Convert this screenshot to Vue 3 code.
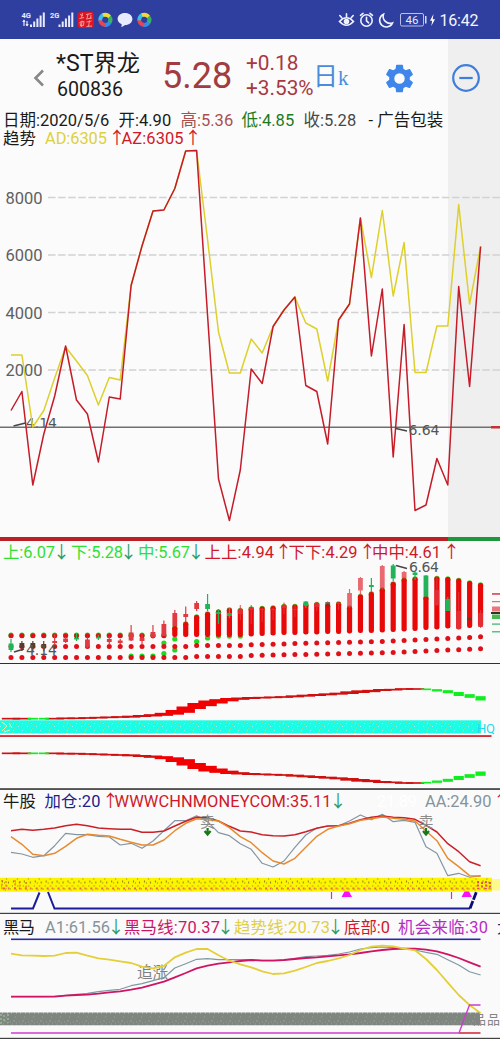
<script setup>
  import { ref } from 'vue'

  const step = 10.92
  const px = (i) => 11 + i * step
  // values are stored as screen y, optionally scaled (k) and shifted (o)
  const line = (ys, o = 0, k = 1) => ys.map((y, i) => `${px(i).toFixed(1)},${(y / k + o).toFixed(1)}`).join(' ')

  const quote = ref([
    { t: '日期:2020/5/6', c: 'ink' },
    { t: '开:4.90', c: 'ink' },
    { t: '高:5.36', c: 'brown' },
    { t: '低:4.85', c: 'green' },
    { t: '收:5.28', c: 'grey' },
    { t: '- 广告包装', c: 'ink' }
  ])

  // legends: [text, x, width, color], arrows have no width and are centered
  const legends = {
    trend: [
      ['趋势', 3, 33, '#1a1a1a'], ['AD:6305', 45, 62, '#ddd040'], ['↑', 117, 0, '#d01828'],
      ['AZ:6305', 121.5, 62, '#d01828'], ['↑', 193, 0, '#d01828']
    ],
    band: [
      ['上:6.07', 3, 52, '#30e030'], ['↓', 61.5, 0, '#2c9a68'], ['下:5.28', 71, 52, '#30e030'],
      ['↓', 128.5, 0, '#2c9a68'], ['中:5.67', 138, 52, '#30e030'], ['↓', 196, 0, '#2c9a68'],
      ['上上:4.94', 204.5, 69.5, '#d01828'], ['↑', 283.5, 0, '#d01828'], ['下下:4.29', 288.5, 69, '#d01828'],
      ['↑', 367.5, 0, '#d01828'], ['中中:4.61', 372, 69, '#d01828'], ['↑', 451.5, 0, '#d01828']
    ],
    bull: [
      ['牛股', 3, 33, '#1a1a1a'], ['加仓:20', 44.5, 56, '#20208c'], ['↑', 110.5, 0, '#d01828'],
      ['WWWCHNMONEYCOM:35.11', 114.5, 217, '#d01828'], ['↓', 338, 0, '#2c9a68'],
      ['21.89', 377, 40, '#ffffff'], ['AA:24.90', 425, 66.5, '#85949c'], ['↑', 501.5, 0, '#d01828']
    ],
    horse: [
      ['黑马', 3, 32, '#1a1a1a'], ['A1:61.56', 45, 65, '#85949c'], ['↓', 116, 0, '#2c9a68'],
      ['黑马线:70.37', 124, 96, '#cc1468'], ['↓', 225.5, 0, '#2c9a68'], ['趋势线:20.73', 234, 96, '#dfcf48'],
      ['↓', 335.5, 0, '#2c9a68'], ['底部:0', 344, 46, '#d01828'], ['机会来临:30', 398, 90, '#b62cc4'],
      ['大', 497, 16, '#20208c']
    ]
  }

  const az = [410.5,391.5,485,434,396,346,400,414,462,397,399,285.5,246,211,210,188.5,151,150.5,316,479,520.5,470,369,383.5,326.5,310,297,385.5,391.5,444,320,304,218,356,289,457,324.5,510.5,505,458.5,485,286.5,386.5,246.5]
  const ad = [355,355,427,410.5,378,347,361,375.5,405,377.5,380,285.5,246,211,210,188.5,151,150.5,240,332,373,373,339,353,326.5,310,297,323,329,381,320,304,218,277.5,210.5,296,242.5,372.5,372.5,326,326,204.5,304,246.5]
  const scale = [[8000, 197.5], [6000, 255], [4000, 312.5], [2000, 370]]

  // thick bars from index 15: [top, bottom]
  const bars = [[626,637],[622,637],[615,637],[612,637],[610,637],[608,637],[608.5,637],[607,636.5],[606.5,636],[606,635.5],[604.5,635],[604.5,635],[603,634.5],[602.5,634.5],[604,634],[602,634],[606,633.5],[594.5,633],[592,633],[588,632.5],[582,632],[578,631.5],[577,631],[596,630],[576.5,629.5],[577,628.5],[578.5,629.5],[581,628],[583,627]]
  const midDots = Array.from({ length: 44 }, (_, i) => i < 17 ? 646.5 : i < 22 ? 645.4 : 644.7 - (i - 22) * 0.27 - Math.max(0, i - 34) * 0.24)
  const lowDots = Array.from({ length: 44 }, (_, i) => i < 17 ? 657.6 : i < 22 ? 656.5 : 655.5 - (i - 22) * 0.22 - Math.max(0, i - 34) * 0.24)
  const limeDots = [[14,643],[14,653.5],[15,639],[15,650],[17,641.5],[18,638]]
  const R = '#e23a42', G = '#22b25a', D = '#5a3a2c'
  // candles: [index, high, low, open, close, color]
  const candles = [
    [0,639,652,643.5,650,G],[1,641,651,643,648,D],[2,641,651,643,648,D],[3,641,651,644,648,D],
    [4,634,646,641,643,R],[5,637,643,638.5,642,R],[6,633,641,638,639.5,G],[7,637,648,639.5,647,R],
    [8,635,640,637,638.5,G],[9,636,645,639,642,R],[10,639,644,640.5,643,R],[11,625,641,632.5,640.5,R],
    [12,634,645,638,641,R],[13,625,638.5,632,637,R],[14,620.5,636,624,636,R],[15,610,626,613,626,R],
    [16,606.5,622,614,617,R],[17,601,611,603,609,R],[18,594,611,604,609,G],[19,609,624,612,614,G],
    [20,608,618,613,616,G],[21,605,620,609,614,R],[22,605,624,607,610,R],[23,608,622,609,610,R],
    [24,608,620,609,610,R],[25,602.5,614,605,608,R],[26,605,617,609,610,R],[27,601,608,601.5,606,G],
    [28,602,611,603,607,R],[29,601.5,608,602,606,D],[30,602,610,603,604,R],[31,589,608,593,607,R],
    [32,577,595,578,590.5,R],[33,578,592,585,587,G],[34,565,590,566,588,R],[35,564,581,565.5,578.5,G],
    [36,571,579,572,578,R],[37,571.5,580,572.5,575,G],[38,575,596.5,575.5,596.5,G],[39,577,606,590,605,R],
    [40,597,611,599,611,G],[41,592,629,611,629,R],[42,617,621,618,620,D],[43,610,628,613,627,R]
  ]

  // ribbon: [center y * 3, height * 3]
  const ribbon = [[161,5],[161,5],[161,5],[161,5],[161,5],[160,5],[160,5],[159,5],[158,5],[157,5],[156,5],[155,6],[153,6],[151,7],[148,9],[142,14],[134,19],[123,18],[115,17],[109,13],[104,10],[101,7],[99,6],[98,5],[97,5],[96,5],[94,6],[92,6],[90,6],[88,6],[86,6],[83,8],[80,8],[78,7],[75,6],[74,5],[72,5],[72,5],[73,5],[76,7],[80,9],[87,12],[93,11],[100,13]]
  const lime = (i) => i === 2 || i === 3 || i > 37
  const segs = ribbon.flatMap(([y, h], i) => {
    const w = lime(i) ? 10.2 : 18.4
    const item = { x: px(i) - w / 2, w, h: h / 3, fill: lime(i) ? '#10ee20' : h > 8 ? '#f00000' : '#d01010' }
    return [{ ...item, y: 665 + (y - h / 2) / 3 }, { ...item, y: 665 + (426 - y - h / 2) / 3 }]
  }).sort((a, b) => b.w - a.w)

  const bullRed = [137,133,136,133,129,122,118,122,129,131,133,133,142,142,138,123,109,97,98,108,124,138,141,149,152,153,149,140,130,123,122,115,104,97,93,97,98,103,121,141,176,200,230,242]
  const bullGrey = [202,207,217,212,182,145,149,149,154,156,180,175,190,168,137,107,107,92,110,143,152,176,193,235,246,228,187,150,129,123,122,108,90,104,88,110,106,112,185,205,272,265,277,272]
  const bullOrange = [155,178,208,212,205,184,160,148,151,153,163,172,180,180,165,137,115,101,104,108,128,155,173,203,228,237,220,187,154,133,123,116,106,101,96,100,103,108,138,167,220,245,272,274]

  const horseYellow = [506,511,512,513,512,504,503,512,520,524,529,534,545,550,543,517,503,492,492,511,527,538,547,559,567,565,557,546,534,528,520,510,495,485,482,484,491,496,522,555,593,630,660,685]
  const horsePink = [635,635,635,635,635,632,630,629,626,622,619,614,608,599,590,577,564,550,542,536,532,528,525,527,527,525,522,519,517,514,511,508,504,499,495,492,491,491,494,499,508,519,532,545]
  const horseGrey = [635,635,635,635,634,631,628,625,620,616,613,602,596,587,578,549,536,523,521,524,524,524,524,526,526,525,520,515,513,511,507,501,492,488,486,488,491,495,502,508,524,540,560,570]
</script>

<template>
  <div class="screen">
    <div class="status">
      <svg width="500" height="39" viewBox="0 0 500 39">
        <g fill="#e8eaff">
          <text x="21.500" y="18" class="net">4G</text>
          <text x="50" y="18" class="net">2G</text>
          <path d="M24 20v6M27 26v-5" stroke="#e8eaff" stroke-width="1.200" />
          <path d="M22.200 22l1.800-2.500 1.500 2.500M25.500 24l1.500 2.500 1.800-2.500" />
          <g v-for="x in [30, 58.5]" :key="x">
            <rect :x="x" y="24.500" width="2" height="2.500" />
            <rect :x="x + 3.2" y="21.500" width="2" height="5.500" />
            <rect :x="x + 6.4" y="18.500" width="2" height="8.500" />
            <rect :x="x + 9.6" y="15.500" width="2" height="11.500" />
            <rect :x="x + 12.8" y="12.500" width="2" height="14.500" />
          </g>
        </g>
        <rect x="77.500" y="12" width="16.500" height="16" rx="3" fill="#dc1424" />
        <g stroke="#f0a8a0" stroke-width=".9" fill="none">
          <path d="M80 14.500l3 1M82.500 13l-1 5M79.500 18.500l4.500-1M86 14.500l5.500-1M88 14l-1 4.500M91 15l-.5 3.500M86 19l6-1M80 22l4-.5-.5 4-3 .5zM82 20.500l-.5 6.500M86.500 22l5-1M89.500 20.500l-1 6M86.500 26.500l5.500-.5" />
        </g>
        <g v-for="x in [105.3, 144.3]" :key="x" :transform="`translate(${x} 19.800)`">
          <path d="M-7 1A7 7 0 0 1 -2 -6.700L-1 -3.200L-4 2z" fill="#38c0e8" />
          <path d="M-3 -6.500A7 7 0 0 1 5.800 -4L2.500 -.500L-2 -3.500z" fill="#f4d838" />
          <path d="M5.500 -4.300A7 7 0 0 1 5.800 4L3 3.500L2 -1z" fill="#38b460" />
          <path d="M6 3.700A7 7 0 0 1 -1.500 6.900L-1 3.500L3 2z" fill="#2c90f0" />
          <path d="M-.5 7A7 7 0 0 1 -7 .5L-3 .8L.5 3.800z" fill="#e84452" />
          <circle r="3" fill="#2f3f9f" />
        </g>
        <path d="M125 13c4.300 0 7.400 2.600 7.400 6s-3.100 6-7.200 6l-3.800 2.200.300-3c-2.600-1-4.100-3-4.100-5.200 0-3.400 3.100-6 7.400-6z" fill="#e8eaff" />

        <g fill="none" stroke="#f0f2ff" stroke-width="1.600" stroke-linecap="round">
          <path d="M339.500 21.500q7-7.500 14 0-7 7.500-14 0zM346.500 17v-3.200M341.800 17.700l-2-2.200M351.200 17.700l2-2.200" />
          <circle cx="346.500" cy="21.500" r="2" fill="#f0f2ff" />
          <circle cx="366.500" cy="20.500" r="5.700" />
          <path d="M366.500 17.300v3.500l2.200 2M360.500 15.300l2.500-2M372.500 15.300l-2.500-2" />
          <path d="M383.500 14.200a6.700 6.700 0 1 0 9 8.700 7 7 0 0 1-9-8.700z" />
        </g>
        <rect x="400.500" y="13.500" width="23" height="12.500" rx="1.500" fill="none" stroke="#b8c0ea" />
        <rect x="425" y="16" width="1.500" height="7.500" fill="#d8dcf6" />
        <text x="405.500" y="23.700" font-size="11.500" textLength="13" fill="#e8eaff">46</text>
        <path d="M433.500 14l-3.500 6.700h2.200l-.900 5.300 3.700-6.800h-2.300z" fill="#fff" />
        <text x="439.500" y="25.800" font-size="16" textLength="39" fill="#f4f5ff">16:42</text>
      </svg>
    </div>

    <div class="main">
      <header>
        <svg class="back" width="12" height="18" viewBox="0 0 12 18"><path d="M10 1.500L2.500 9l7.500 7.500" /></svg>
        <div class="name">
          <b>*ST界龙</b>
          <i>600836</i>
        </div>
        <div class="price">5.28</div>
        <div class="change">
          <span>+0.18</span>
          <span>+3.53%</span>
        </div>
        <div class="period">日<em>k</em></div>
        <svg class="gear" width="33" height="33" viewBox="0 0 24 24">
          <path d="M19.430 12.980c.040-.320.070-.640.070-.980s-.030-.660-.070-.980l2.110-1.650c.190-.150.240-.420.120-.640l-2-3.460c-.120-.220-.390-.300-.610-.220l-2.490 1c-.520-.400-1.080-.730-1.690-.980l-.380-2.650C14.460 2.180 14.250 2 14 2h-4c-.250 0-.460.180-.490.420l-.380 2.650c-.610.250-1.170.590-1.690.980l-2.490-1c-.230-.090-.490 0-.610.220l-2 3.460c-.130.220-.070.490.120.640l2.110 1.650c-.040.320-.070.650-.070.980s.030.660.070.980l-2.110 1.650c-.190.150-.240.420-.120.640l2 3.460c.120.220.390.300.610.220l2.490-1c.520.400 1.080.730 1.690.980l.380 2.650c.030.240.240.420.490.420h4c.250 0 .460-.180.490-.420l.380-2.650c.610-.250 1.170-.590 1.690-.980l2.490 1c.230.090.490 0 .610-.220l2-3.460c.120-.220.070-.490-.120-.640l-2.110-1.650zM12 15.800a3.800 3.800 0 1 1 0-7.600 3.800 3.800 0 0 1 0 7.600z" />
        </svg>
        <svg class="minus" width="30" height="30" viewBox="0 0 30 30">
          <circle cx="15" cy="15" r="12.800" />
          <path d="M8.300 15h13.400" />
        </svg>
      </header>
      <div class="quote">
        <span v-for="q in quote" :key="q.t" :class="q.c">{{ q.t }}</span>
      </div>
      <svg class="chart" width="500" height="408" viewBox="0 129 500 408">
        <g class="legend">
          <text v-for="l in legends.trend" :key="l[1]" :x="l[1]" y="144" :fill="l[3]" :class="{ arrow: !l[2] }" :textLength="l[2] || null">{{ l[0] }}</text>
        </g>
        <g v-for="s in scale" :key="s[0]">
          <line x1="48" x2="500" :y1="s[1]" :y2="s[1]" class="dash" />
          <text x="5.500" :y="s[1] + 6" class="axis" textLength="37">{{ s[0] }}</text>
        </g>
        <text x="26" y="427.500" class="mark" textLength="31">4.14</text>
        <path d="M13.500 426l12-3" class="pointer" />
        <line x1="0" x2="491" y1="427.300" y2="427.300" stroke="#707070" stroke-width="1.500" />
        <rect x="491" y="426" width="9" height="2.500" fill="#c83038" />
        <polyline :points="line(ad)" stroke="#ddd02c" class="ln" />
        <polyline :points="line(az)" stroke="#c41c28" class="ln" />
        <path d="M396 428.500l11 2.500" class="pointer" />
        <text x="408.500" y="435" class="mark" textLength="31">6.64</text>
      </svg>
    </div>
    <div class="split"></div>

    <svg class="chart" width="500" height="123" viewBox="0 541 500 123">
      <g class="legend">
        <text v-for="l in legends.band" :key="l[1]" :x="l[1]" y="557.500" :fill="l[3]" :class="{ arrow: !l[2] }" :textLength="l[2] || null">{{ l[0] }}</text>
      </g>
      <g fill="#20d820">
        <circle v-for="i in 15" :key="'h' + i" :cx="px(i - 1)" cy="635.200" r="2.600" />
        <circle v-for="i in [11, 12, 13]" :key="'k' + i" :cx="px(i)" cy="656" r="2.600" />
        <circle v-for="(d, i) in limeDots" :key="'g' + i" :cx="px(d[0])" :cy="d[1]" r="2.600" />
        <circle v-for="i in [19, 20, 21]" :key="'u' + i" :cx="px(i)" cy="636.200" r="2.500" />
      </g>
      <g fill="#e01018">
        <circle v-for="i in 15" :key="'t' + i" :cx="px(i - 1)" cy="635.700" r="2.500" />
        <circle v-for="(y, i) in midDots" :key="'m' + i" :cx="px(i)" :cy="y" r="2.500" />
        <circle v-for="(y, i) in lowDots" :key="'l' + i" :cx="px(i)" :cy="y" r="2.500" />
      </g>
      <g v-for="(b, i) in bars" :key="'b' + i">
        <rect :x="px(i + 15) - 2.6" :y="b[0] - 0.8" width="5.200" height="6" rx="2.600" fill="#40d020" />
        <rect :x="px(i + 15) - 2.6" :y="b[0]" width="5.200" :height="b[1] - b[0]" rx="2.300" fill="#e80808" />
      </g>
      <g v-for="c in candles" :key="'c' + c[0]" :fill="c[5]" :opacity="c[0] > 18 && c[5] !== G ? 0.75 : 1">
        <rect :x="px(c[0]) - 0.6" :y="c[1]" width="1.200" :height="c[2] - c[1]" />
        <rect :x="px(c[0]) - 2.4" :y="c[3]" width="4.800" :height="c[4] - c[3]" />
      </g>
      <path d="M14 652l10-3" class="pointer" />
      <text x="26" y="654.500" class="mark" textLength="31">4.14</text>
      <path d="M396 565.500l11 3" class="pointer" />
      <text x="409" y="572" class="mark" textLength="30">6.64</text>
      <g>
        <rect x="492" y="593.200" width="8" height="1.500" fill="#d83840" />
        <rect x="492" y="601" width="8" height="1.200" fill="#e07078" />
        <rect x="492" y="606.500" width="8" height="5" fill="#e87880" />
        <rect x="491" y="612" width="9" height="2" fill="#333322" />
        <rect x="492" y="614.500" width="8" height="4.500" fill="#48b850" />
        <rect x="492" y="623.500" width="8" height="1.200" fill="#38b068" />
        <rect x="492" y="631.200" width="8" height="1.200" fill="#38b068" />
      </g>
      <rect x="0" y="663" width="500" height="1.500" fill="#303030" />
    </svg>

    <svg class="chart" width="500" height="126" viewBox="0 664 500 126">
      <defs>
        <pattern id="cyan" width="9" height="7" patternUnits="userSpaceOnUse">
          <rect width="9" height="7" fill="#1cfbe4" />
          <path d="M1 1h1v1h-1zM5 0h1v1h-1zM7 3h1v1h-1zM3 4h1v1h-1z" fill="#6ee8a8" />
          <path d="M4 2h1v1h-1zM0 5h1v1h-1z" fill="#8cf6f6" />
        </pattern>
      </defs>
      <rect v-for="(s, i) in segs" :key="i" :x="s.x" :y="s.y" :width="s.w" :height="s.h" :fill="s.fill" />
      <rect x="0" y="720.300" width="481" height="13.200" fill="url(#cyan)" />
      <text x="477" y="732.500" class="edge" textLength="18" fill="#20dcec">HQ</text>
      <path d="M2 722l5 4-5 5M9 723l3 5M4 732l6-2" stroke="#e8f8a0" fill="none" />
      <rect x="0" y="735.200" width="491.500" height="1.700" fill="#cc1820" />
      <rect x="0" y="788.200" width="500" height="1.700" fill="#404040" />
    </svg>

    <svg class="chart" width="500" height="124" viewBox="0 790 500 124">
      <defs>
        <pattern id="yellow" width="10.920" height="14" patternUnits="userSpaceOnUse" y="877.500">
          <rect width="10.920" height="14" fill="#fdf500" />
          <path d="M2 3h1v2h-1zM6 1h1v1h-1zM8 4h1v2h-1zM4 5h1v1h-1zM1 8h1v1h-1zM10 11h1v1h-1z" fill="#8a8020" />
          <path d="M3 10h2v2h-2zM6 8h1.500v1h-1.500zM8 10h1.500v2h-1.500zM5 12h1v1h-1z" fill="#e06a50" />
        </pattern>
      </defs>
      <g class="legend">
        <text v-for="l in legends.bull" :key="l[1]" :x="l[1]" y="807" :fill="l[3]" :class="{ arrow: !l[2] }" :textLength="l[2] || null">{{ l[0] }}</text>
      </g>
      <polyline :points="line(bullGrey, 785, 3)" stroke="#8495a2" class="ln thin" />
      <polyline :points="line(bullRed, 785, 3)" stroke="#cc2028" class="ln" />
      <polyline :points="line(bullOrange, 785, 3)" stroke="#e68c30" class="ln" />
      <g v-for="x in [207.6, 426]" :key="x">
        <text :x="x" y="827" class="sell">卖</text>
        <path :d="`M${x} 828v6M${x - 3} 831l3 3.500 3-3.500`" stroke="#187818" stroke-width="2.200" fill="none" />
      </g>
      <rect x="0" y="877.700" width="492" height="14" fill="url(#yellow)" />
      <rect x="492" y="879" width="8" height="11.500" fill="#fdf98a" />
      <path d="M478 881v8M482 882v6M486 881v8M490 882v6" stroke="#e84070" stroke-width="1.800" stroke-dasharray="2 1.500" />
      <path d="M2 880v10M6 881v8M15 880v9M20 881v8M26 882v7" stroke="#e85840" stroke-dasharray="2 1.600" />
      <path d="M11 908.500h22l6.500-16M48 892l6.500 16.500h415.500" stroke="#1c1c98" stroke-width="2" fill="none" />
      <path d="M470 908.500l6.500-17" stroke="#0c0c78" stroke-width="2.800" stroke-dasharray="8 1.500" />
      <path d="M331.500 892v7M451.500 892v7" stroke="#c830c8" stroke-width="1.200" />
      <path d="M341.500 897l3-5.500h4.500l3 5.500zM461.500 897l3-5.500h4.500l3 5.500z" fill="#fa10fa" />
      <rect x="0" y="912.800" width="500" height="1.700" fill="#404040" />
    </svg>

    <svg class="chart" width="500" height="125" viewBox="0 914 500 125">
      <defs>
        <pattern id="grey" width="9" height="13" patternUnits="userSpaceOnUse" y="1012.500">
          <rect width="9" height="13" fill="#7f857f" />
          <path d="M1 9h1v1h-1zM4 8h2v1h-2zM3 11h1v1h-1zM7 10h1v1h-1zM6 4h1v1h-1z" fill="#98a098" />
          <path d="M2 0h1v1h-1zM7 0h1v1h-1z" fill="#c8c8c8" />
        </pattern>
      </defs>
      <g class="legend">
        <text v-for="l in legends.horse" :key="l[1]" :x="l[1]" y="932.500" :fill="l[3]" :class="{ arrow: !l[2] }" :textLength="l[2] || null">{{ l[0] }}</text>
      </g>
      <rect x="11" y="938.500" width="469.500" height="1.600" fill="#2828a8" />
      <text x="137" y="978" class="chase">追涨</text>
      <polyline :points="line(horseGrey, 785, 3)" stroke="#7f98a2" class="ln thin" />
      <polyline :points="line(horsePink, 785, 3)" stroke="#d01464" class="ln bold" />
      <polyline :points="line(horseYellow, 785, 3)" stroke="#e4cf38" class="ln bold" />
      <rect x="0" y="1012.500" width="480" height="12.800" fill="url(#grey)" />
      <path d="M1 1014v10M4 1015v8M8 1014v9" stroke="#a8d0a8" stroke-dasharray="2 2" />
      <text x="473" y="1024" class="edge" textLength="27" fill="#858585">品品</text>
      <path d="M11 1033h448" stroke="#cc3ccc" stroke-width="1.500" />
      <path d="M459 1033h21.500" stroke="#d02030" stroke-width="1.500" />
      <path d="M459 1033l10.500-28h11" stroke="#cc3ccc" stroke-width="1.400" fill="none" />
      <rect x="0" y="1037.800" width="500" height="1.200" fill="#404040" />
    </svg>
  </div>
</template>

<style>
  body{
    margin: 0;
    background: #fafafa;
  }
</style>

<style scoped>
  .screen{
    width: 500px;
    height: 1039px;
    overflow: hidden;
    display: flex;
    flex-direction: column;
    background: #fafafa;
    font-family: Roboto, "Noto Sans CJK SC", sans-serif;
    color: #1a1a1a;
  }
  svg{
    display: block;
    flex-shrink: 0;
  }
  .status{
    height: 39px;
    background: #2f3f9f;
  }
  .net{
    font-size: 7.5px;
    font-weight: 700;
  }
  .main{
    height: 498px;
    background: linear-gradient(to right, #fbfbfb 448px, #efefef 448px);
  }
  header{
    height: 72px;
    display: grid;
    grid-template-columns: 56px 106px 84px 69px 53px 64px 68px;
    align-items: center;
    white-space: nowrap;
  }
  .back{
    margin-left: 33px;
    margin-top: 6px;
    fill: none;
    stroke: #888;
    stroke-width: 2.6;
  }
  .name b, .name i{
    display: block;
    font-style: normal;
    font-weight: 400;
  }
  .name b{
    font-size: 23.2px;
    line-height: 28px;
  }
  .name i{
    font-size: 19.6px;
    line-height: 25px;
    padding-left: 1px;
  }
  .price{
    font-size: 36px;
    line-height: 40px;
    padding-top: 2px;
    color: #a03c42;
  }
  .change{
    color: #a83840;
    font-size: 20.8px;
    line-height: 25px;
    padding-top: 1px;
  }
  .change span{
    display: block;
  }
  .period{
    color: #4a8cdc;
    font-size: 25px;
    line-height: 30px;
    margin-left: -2px;
    padding-top: 4px;
  }
  .period em{
    font: 21px "Liberation Serif", serif;
  }
  .gear{
    margin-left: 15px;
    margin-top: 6px;
    fill: #3f86ea;
  }
  .minus{
    margin-left: 19px;
    margin-top: 6px;
    fill: none;
    stroke: #3f7edc;
    stroke-width: 2.2;
  }
  .quote{
    height: 18px;
    display: grid;
    grid-template-columns: 115.5px 62px 61px 62px 65px auto;
    padding-left: 3px;
    font-size: 16.5px;
    line-height: 19px;
    white-space: nowrap;
  }
  .brown{
    color: #a85050;
  }
  .green{
    color: #1c7a1c;
  }
  .grey{
    color: #484848;
  }
  .split{
    height: 4px;
    flex-shrink: 0;
    background: linear-gradient(to right, #bc2026 448px, #20963c 448px);
  }
  .legend text{
    font-size: 16.4px;
  }
  .legend text.arrow{
    font-family: "Noto Sans CJK SC", sans-serif;
    font-size: 17px;
    text-anchor: middle;
  }
  .ln{
    fill: none;
    stroke-width: 1.5;
    stroke-linejoin: round;
  }
  .ln.thin{
    stroke-width: 1.2;
  }
  .ln.bold{
    stroke-width: 1.8;
  }
  .dash{
    stroke: #d2d2d2;
    stroke-width: 1.4;
    stroke-dasharray: 7.5 2.6;
  }
  .axis{
    font-size: 16.5px;
    fill: #606060;
  }
  .mark{
    font-family: "DejaVu Sans", sans-serif;
    font-size: 14px;
    fill: #555;
  }
  .pointer{
    stroke: #444;
    stroke-width: 1.4;
  }
  .sell{
    font-size: 15px;
    fill: #8c8c8c;
    text-anchor: middle;
  }
  .chase{
    font-size: 15.5px;
    fill: #808080;
  }
  .edge{
    font-size: 13px;
  }
</style>
